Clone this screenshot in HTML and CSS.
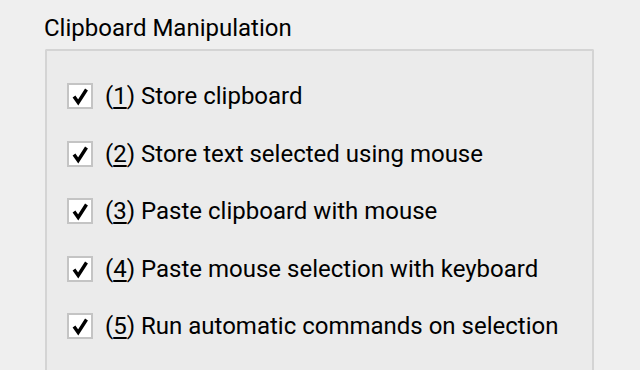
FILE: index.html
```html
<!DOCTYPE html>
<html>
<head>
<meta charset="utf-8">
<link rel="stylesheet" href="styles.css">
</head>
<body>
<div class="page">
  <div class="title">Clipboard Manipulation</div>
  <div class="group">
    <label class="row"><span class="box"><svg viewBox="0 0 22 22" width="22" height="22"><path d="M5 11.5 L9.2 17.5 L17.5 4.5" fill="none" stroke="#000" stroke-width="3.4" stroke-linejoin="miter"/></svg></span><span class="text">(<u>1</u>) Store clipboard</span></label>
    <label class="row"><span class="box"><svg viewBox="0 0 22 22" width="22" height="22"><path d="M5 11.5 L9.2 17.5 L17.5 4.5" fill="none" stroke="#000" stroke-width="3.4" stroke-linejoin="miter"/></svg></span><span class="text">(<u>2</u>) Store text selected using mouse</span></label>
    <label class="row"><span class="box"><svg viewBox="0 0 22 22" width="22" height="22"><path d="M5 11.5 L9.2 17.5 L17.5 4.5" fill="none" stroke="#000" stroke-width="3.4" stroke-linejoin="miter"/></svg></span><span class="text">(<u>3</u>) Paste clipboard with mouse</span></label>
    <label class="row"><span class="box"><svg viewBox="0 0 22 22" width="22" height="22"><path d="M5 11.5 L9.2 17.5 L17.5 4.5" fill="none" stroke="#000" stroke-width="3.4" stroke-linejoin="miter"/></svg></span><span class="text">(<u>4</u>) Paste mouse selection with keyboard</span></label>
    <label class="row"><span class="box"><svg viewBox="0 0 22 22" width="22" height="22"><path d="M5 11.5 L9.2 17.5 L17.5 4.5" fill="none" stroke="#000" stroke-width="3.4" stroke-linejoin="miter"/></svg></span><span class="text">(<u>5</u>) Run automatic commands on selection</span></label>
  </div>
</div>
</body>
</html>
```
FILE: styles.css
```css
html, body {
  margin: 0;
  padding: 0;
  background: #efefef;
  width: 640px;
  height: 370px;
  overflow: hidden;
}
.page {
  font-family: Roboto, "Liberation Sans", sans-serif;
  font-size: 24px;
  color: #000;
  padding: 14px 0 0 44px;
  box-sizing: border-box;
  height: 370px;
  display: flex;
  flex-direction: column;
}
.title {
  line-height: 28px;
  height: 35px;
}
.group {
  margin-left: 1px;
  width: 549px;
  flex: 1;
  background: #ebebeb;
  border: 2px solid #d4d4d4;
  border-bottom: none;
  border-radius: 2px 2px 0 0;
  padding: 31px 0 0 20px;
  box-sizing: border-box;
  display: flex;
  flex-direction: column;
  gap: 29.6px;
}
.row {
  display: flex;
  align-items: center;
  gap: 12px;
  height: 28px;
  line-height: 28px;
}
.box {
  width: 22px;
  height: 22px;
  background: #fff;
  border: 2px solid #c4c4c4;
  display: flex;
  align-items: center;
  justify-content: center;
}
.text u {
  text-decoration-thickness: 2px;
  text-underline-offset: 3px;
}
```
